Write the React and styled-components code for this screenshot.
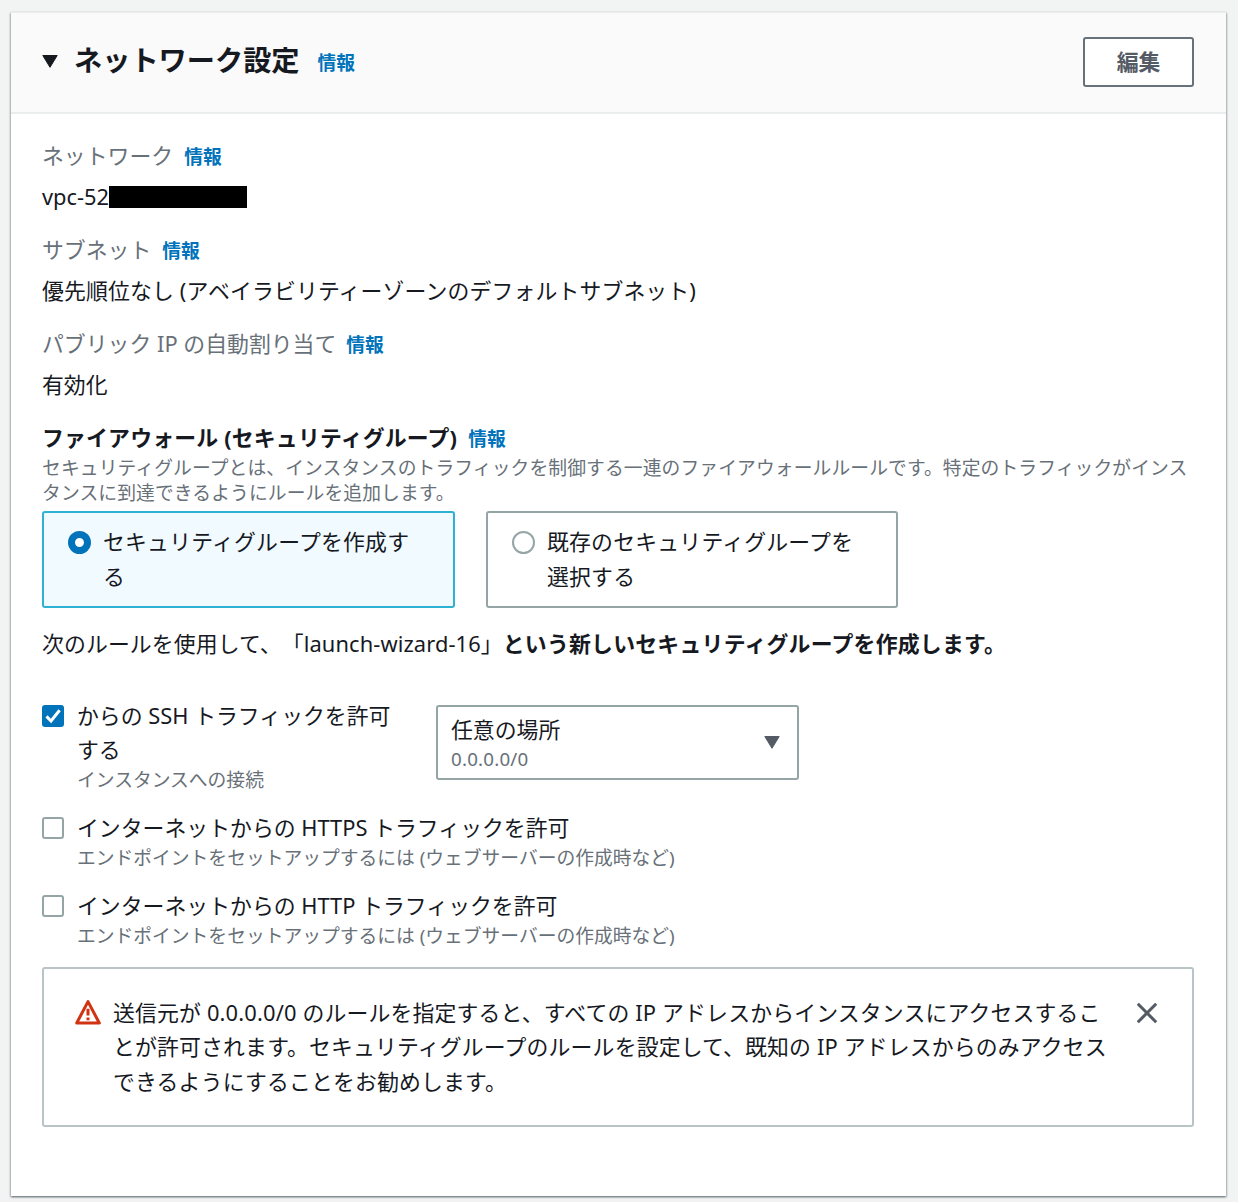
import { useState } from "react";
import styled, { createGlobalStyle } from "styled-components";

const WIZARD_NAME = "launch-wizard-16";

export default function App() {
	const [group, setGroup] = useState("create");
	const [rules, setRules] = useState({ ssh: true, https: false, http: false });

	const toggle = (key) => setRules({ ...rules, [key]: !rules[key] });

	return (
		<>
			<GlobalStyle />
			<Panel>
				<PanelHeader>
					<HeaderTitle>
						<Caret viewBox="0 0 16 13" $color="#16191f">
							<path d="M0.8 0.5H15.2L8 12.3Z" />
						</Caret>
						<Headline>ネットワーク設定</Headline>
						<InfoLink $gap="18px" $down="2px">情報</InfoLink>
					</HeaderTitle>
					<EditButton>編集</EditButton>
				</PanelHeader>

				<PanelBody>
					<Field>
						<FieldLabel>
							ネットワーク<InfoLink $gap="11px">情報</InfoLink>
						</FieldLabel>
						<FieldValue>
							<Spaced>vpc-52</Spaced>
							<Redacted />
						</FieldValue>
					</Field>
					<Field>
						<FieldLabel>
							サブネット<InfoLink $gap="11px">情報</InfoLink>
						</FieldLabel>
						<FieldValue>
							<Spaced $spacing="0.13px">
								優先順位なし (アベイラビリティーゾーンのデフォルトサブネット)
							</Spaced>
						</FieldValue>
					</Field>
					<Field>
						<FieldLabel>
							パブリック IP の自動割り当て<InfoLink>情報</InfoLink>
						</FieldLabel>
						<FieldValue>有効化</FieldValue>
					</Field>

					<GroupTitle>
						<Spaced $spacing="0.18px">ファイアウォール (セキュリティグループ)</Spaced>
						<InfoLink $gap="11px">情報</InfoLink>
					</GroupTitle>
					<Description $spacing="0.11px">
						セキュリティグループとは、インスタンスのトラフィックを制御する一連のファイアウォールルールです。特定のトラフィックがインス
						<br />
						タンスに到達できるようにルールを追加します。
					</Description>

					<Tiles>
						<Tile $active={group === "create"} onClick={() => setGroup("create")}>
							<Radio $active={group === "create"} />
							<TileLabel>
								セキュリティグループを作成す
								<br />る
							</TileLabel>
						</Tile>
						<Tile $active={group === "select"} onClick={() => setGroup("select")}>
							<Radio $active={group === "select"} />
							<TileLabel>
								既存のセキュリティグループを
								<br />
								選択する
							</TileLabel>
						</Tile>
					</Tiles>

					<RuleNote>
						<Spaced $spacing="0.1px">次のルールを使用して、「{WIZARD_NAME}」</Spaced>
						<strong>という新しいセキュリティグループを作成します。</strong>
					</RuleNote>

					<SshRow>
						<Rule
							checked={rules.ssh}
							onChange={() => toggle("ssh")}
							hint="インスタンスへの接続"
						>
							からの SSH トラフィックを許可
							<br />
							する
						</Rule>
						<Select>
							<SelectText>
								<span>任意の場所</span>
								<small>0.0.0.0/0</small>
							</SelectText>
							<Caret viewBox="0 0 16 13" $color="#545b64">
								<path d="M0.8 0.5H15.2L8 12.3Z" />
							</Caret>
						</Select>
					</SshRow>
					<Rule
						checked={rules.https}
						onChange={() => toggle("https")}
						hint="エンドポイントをセットアップするには (ウェブサーバーの作成時など)"
					>
						インターネットからの HTTPS トラフィックを許可
					</Rule>
					<Rule
						checked={rules.http}
						onChange={() => toggle("http")}
						hint="エンドポイントをセットアップするには (ウェブサーバーの作成時など)"
					>
						インターネットからの HTTP トラフィックを許可
					</Rule>

					<Alert>
						<WarningIcon viewBox="0 0 26 26">
							<path d="M13 2.6L24.3 24H1.7Z" />
							<path d="M13 9.8V16.6M13 18.4V21.2" />
						</WarningIcon>
						<AlertText>
							送信元が 0.0.0.0/0 のルールを指定すると、すべての IP アドレスからインスタンスにアクセスするこ
							<br />
							とが許可されます。セキュリティグループのルールを設定して、既知の IP アドレスからのみアクセス
							<br />
							できるようにすることをお勧めします。
						</AlertText>
						<CloseIcon viewBox="0 0 22 22">
							<path d="M1.8 1.8L20.2 20.2M20.2 1.8L1.8 20.2" />
						</CloseIcon>
					</Alert>
				</PanelBody>
			</Panel>
		</>
	);
}

function Rule({ checked, onChange, hint, children }) {
	return (
		<StyledRule>
			<Checkbox $checked={checked} onClick={onChange}>
				{checked && (
					<svg viewBox="0 0 22 22">
						<path d="M4.5 11.4L9 16L17.6 5.2" />
					</svg>
				)}
			</Checkbox>
			<div>
				<RuleLabel>{children}</RuleLabel>
				<Description>{hint}</Description>
			</div>
		</StyledRule>
	);
}

const GlobalStyle = createGlobalStyle`
	*, *::before, *::after {
		box-sizing: border-box;
	}
	body {
		margin: 0;
		background-color: #f2f3f3;
		color: #16191f;
		font-family: "Noto Sans", "Noto Sans CJK JP", sans-serif;
		font-size: 21.87px;
		line-height: 34px;
		white-space: nowrap;
		text-spacing-trim: space-all;
	}
`;

const Panel = styled.section`
	width: 1215px;
	height: 1184px;
	margin: 12px 0 6px 11px;
	background-color: #ffffff;
	border-top: 1px solid #eaeded;
	box-shadow: 0 1px 2px rgba(0, 28, 36, 0.5), 1px 1px 2px rgba(0, 28, 36, 0.15),
		-1px 1px 2px rgba(0, 28, 36, 0.15);
`;

const PanelHeader = styled.header`
	display: flex;
	align-items: center;
	justify-content: space-between;
	height: 101px;
	padding: 0 32px 1px 31px;
	background-color: #fafafa;
	border-bottom: 2px solid #eaeded;
`;

const HeaderTitle = styled.div`
	display: flex;
	align-items: center;
	padding-bottom: 2px;
`;

const Caret = styled.svg`
	flex: none;
	width: 16px;
	height: 13px;
	fill: ${({ $color }) => $color};
	stroke: ${({ $color }) => $color};
	stroke-linejoin: round;
`;

const Headline = styled.h2`
	margin: 0 0 2px 16px;
	font-size: 28.2px;
	font-weight: 700;
`;

const InfoLink = styled.a`
	position: relative;
	top: ${({ $down }) => $down || "0"};
	margin-left: ${({ $gap }) => $gap || "10px"};
	color: #0073bb;
	font-size: 18.75px;
	font-weight: 700;
`;

const EditButton = styled.button`
	width: 111px;
	height: 50px;
	padding: 0;
	background-color: #ffffff;
	border: 2px solid #687078;
	border-radius: 3px;
	color: #545b64;
	font: inherit;
	font-weight: 700;
`;

const PanelBody = styled.div`
	padding: 25px 32px 0 31px;
`;

const Field = styled.div`
	margin-bottom: 19px;
`;

const FieldLabel = styled.div`
	height: 34px;
	color: #687078;
`;

const FieldValue = styled.div`
	display: flex;
	align-items: center;
	height: 34px;
	margin-top: 7px;
`;

const Spaced = styled.span`
	letter-spacing: ${({ $spacing }) => $spacing || "0"};
`;

const Redacted = styled.span`
	width: 138px;
	height: 22px;
	background-color: #000000;
`;

const GroupTitle = styled.div`
	height: 34px;
	font-weight: 700;
`;

const Description = styled.div`
	color: #687078;
	font-size: 18.77px;
	line-height: 25px;
	letter-spacing: ${({ $spacing }) => $spacing || "0"};
`;

const Tiles = styled.div`
	display: flex;
	gap: 31px;
	margin-top: 6px;
`;

const Tile = styled.div`
	display: flex;
	width: ${({ $active }) => ($active ? "413px" : "412px")};
	height: 97px;
	padding: 12px 24px;
	background-color: ${({ $active }) => ($active ? "#f1faff" : "#ffffff")};
	border: 2px solid ${({ $active }) => ($active ? "#2eb2d4" : "#95a5a6")};
	border-radius: 3px;
`;

const TileLabel = styled.span`
	line-height: 34.6px;
	letter-spacing: 0.2px;
`;

const Radio = styled.span`
	flex: none;
	width: 23px;
	height: 23px;
	margin: 6px 12px 0 0;
	background-color: #ffffff;
	border: ${({ $active }) => ($active ? "7px solid #0073bb" : "2px solid #95a5a6")};
	border-radius: 50%;
`;

const RuleNote = styled.div`
	height: 34px;
	margin: 19px 0 38px;

	strong {
		letter-spacing: 0.23px;
	}
`;

const SshRow = styled.div`
	display: flex;
	align-items: flex-start;
`;

const StyledRule = styled.div`
	display: flex;
	min-width: 394px;
	margin-bottom: 19px;
`;

const Checkbox = styled.span`
	display: flex;
	flex: none;
	width: 22px;
	height: 22px;
	margin: 6px 13px 0 0;
	background-color: ${({ $checked }) => ($checked ? "#0073bb" : "#ffffff")};
	border: ${({ $checked }) => ($checked ? "0" : "2px solid #95a5a6")};
	border-radius: 3px;

	svg {
		width: 22px;
		height: 22px;
		fill: none;
		stroke: #ffffff;
		stroke-width: 3;
	}
`;

const RuleLabel = styled.div`
	line-height: 34px;
`;

const Select = styled.div`
	display: flex;
	align-items: center;
	justify-content: space-between;
	width: 363px;
	height: 75px;
	margin-top: 6px;
	padding: 0 17px 0 13px;
	border: 2px solid #95a5a6;
	border-radius: 3px;
`;

const SelectText = styled.div`
	display: flex;
	flex-direction: column;
	padding-bottom: 2px;
	line-height: 34px;

	small {
		color: #687078;
		font-size: 18.75px;
		line-height: 24px;
		letter-spacing: 0.2px;
	}
`;

const Alert = styled.div`
	display: flex;
	align-items: flex-start;
	height: 160px;
	padding: 27px 34px 0 31px;
	border: 2px solid #b8c4c6;
	border-radius: 3px;
`;

const WarningIcon = styled.svg`
	flex: none;
	width: 26px;
	height: 26px;
	margin-top: 3px;
	fill: none;
	stroke: #d13212;
	stroke-width: 3;
	stroke-linejoin: round;
`;

const AlertText = styled.div`
	flex: 1;
	margin-left: 12px;
	line-height: 34.4px;
	letter-spacing: 0.16px;
`;

const CloseIcon = styled.svg`
	flex: none;
	width: 22px;
	height: 22px;
	margin-top: 6px;
	fill: none;
	stroke: #545b64;
	stroke-width: 3;
`;
